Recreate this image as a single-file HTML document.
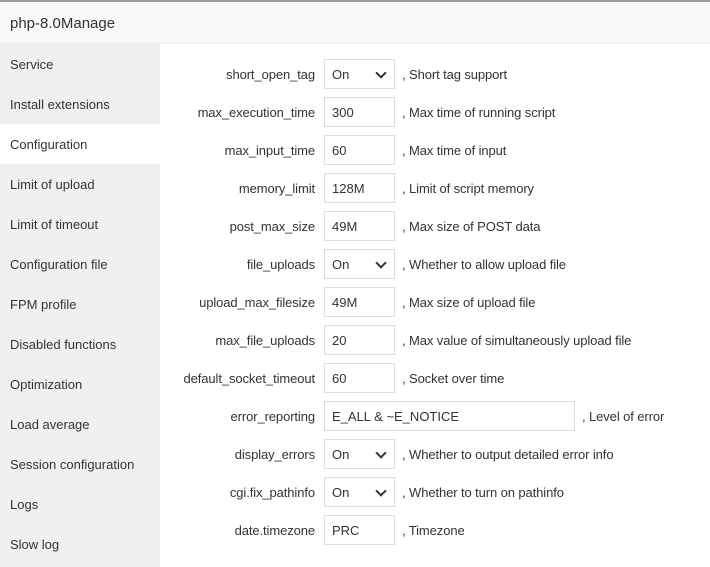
<!DOCTYPE html>
<html><head><meta charset="utf-8"><style>
*{box-sizing:border-box;margin:0;padding:0}
body{width:710px;height:567px;overflow:hidden;background:#fff;font-family:"Liberation Sans",sans-serif;font-size:13px;color:#333;position:relative}
.top{position:absolute;left:0;top:0;width:710px;height:2px;background:#9a9a9a}
.hd{position:absolute;left:0;top:2px;width:710px;height:42px;background:#f8f8f8;border-bottom:1px solid #eee;font-size:15px;padding:13px 0 0 10px;color:#333}
.sb{position:absolute;left:0;top:44px;width:160px;height:523px;background:#f0f0f0}
.sb div{height:40px;line-height:42px;padding-left:10px;font-size:13px;color:#333}
.sb .a{background:#fff}
.row{position:absolute;left:160px;width:550px;height:30px}
.lb{position:absolute;right:395px;top:8px;white-space:nowrap;text-align:right;letter-spacing:-0.1px}
.in{position:absolute;left:164px;top:0;width:71px;height:30px;border:1px solid #ddd;background:#fff;padding:7px 0 0 7px}
.in.w{width:251px}
.in.s:after{content:"";position:absolute;right:9px;top:9px;width:6px;height:6px;border-right:2px solid #333;border-bottom:2px solid #333;transform:rotate(45deg)}
.ds{position:absolute;left:242px;top:8px;white-space:nowrap;letter-spacing:-0.1px}
</style></head><body>
<div class="top"></div>
<div class="hd">php-8.0Manage</div>
<div class="sb">
<div>Service</div><div>Install extensions</div><div class="a">Configuration</div><div>Limit of upload</div><div>Limit of timeout</div><div>Configuration file</div><div>FPM profile</div><div>Disabled functions</div><div>Optimization</div><div>Load average</div><div>Session configuration</div><div>Logs</div><div>Slow log</div>
</div>
<div class="row" style="top:59px"><span class="lb">short_open_tag</span><div class="in s">On</div><span class="ds">, Short tag support</span></div>
<div class="row" style="top:97px"><span class="lb">max_execution_time</span><div class="in">300</div><span class="ds">, Max time of running script</span></div>
<div class="row" style="top:135px"><span class="lb">max_input_time</span><div class="in">60</div><span class="ds">, Max time of input</span></div>
<div class="row" style="top:173px"><span class="lb">memory_limit</span><div class="in">128M</div><span class="ds">, Limit of script memory</span></div>
<div class="row" style="top:211px"><span class="lb">post_max_size</span><div class="in">49M</div><span class="ds">, Max size of POST data</span></div>
<div class="row" style="top:249px"><span class="lb">file_uploads</span><div class="in s">On</div><span class="ds">, Whether to allow upload file</span></div>
<div class="row" style="top:287px"><span class="lb">upload_max_filesize</span><div class="in">49M</div><span class="ds">, Max size of upload file</span></div>
<div class="row" style="top:325px"><span class="lb">max_file_uploads</span><div class="in">20</div><span class="ds">, Max value of simultaneously upload file</span></div>
<div class="row" style="top:363px"><span class="lb">default_socket_timeout</span><div class="in">60</div><span class="ds">, Socket over time</span></div>
<div class="row" style="top:401px"><span class="lb">error_reporting</span><div class="in w">E_ALL &amp; ~E_NOTICE</div><span class="ds" style="left:422px">, Level of error</span></div>
<div class="row" style="top:439px"><span class="lb">display_errors</span><div class="in s">On</div><span class="ds">, Whether to output detailed error info</span></div>
<div class="row" style="top:477px"><span class="lb">cgi.fix_pathinfo</span><div class="in s">On</div><span class="ds">, Whether to turn on pathinfo</span></div>
<div class="row" style="top:515px"><span class="lb">date.timezone</span><div class="in">PRC</div><span class="ds">, Timezone</span></div>
</body></html>
